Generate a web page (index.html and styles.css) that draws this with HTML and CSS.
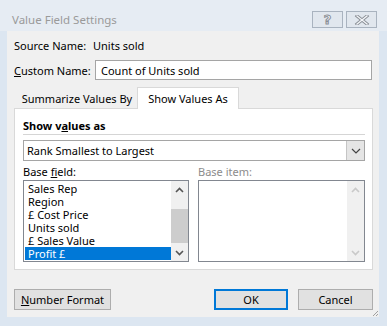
FILE: index.html
```html
<!DOCTYPE html>
<html>
<head>
<meta charset="utf-8">
<link rel="stylesheet" href="styles.css">
</head>
<body>
<div class="window">
  <div class="titlebar">
    <span class="title">Value Field Settings</span>
    <div class="tbtns">
      <div class="tbtn"><span class="qmark">?</span></div>
      <div class="tbtn">
        <svg width="16" height="10" viewBox="0 0 16 10"><path d="M3 1 L13 9 M13 1 L3 9" stroke="#8a8f96" stroke-width="3.2" stroke-linecap="square"/><path d="M3 1 L13 9 M13 1 L3 9" stroke="#f4f6f9" stroke-width="1.3" stroke-linecap="square"/></svg>
      </div>
    </div>
  </div>
  <div class="client">
    <div class="row src"><span class="lbl">Source Name:</span><span class="val">Units sold</span></div>
    <div class="row cust"><span class="lbl"><u>C</u>ustom Name:</span><div class="input">Count of Units sold</div></div>
    <div class="tabs">
      <div class="tab">Summarize Values By</div>
      <div class="tab sel">Show Values As</div>
    </div>
    <div class="panel">
      <div class="heading"><span>Show v<u>a</u>lues as</span></div>
      <div class="sep"></div>
      <div class="combo"><span class="ctext">Rank Smallest to Largest</span><div class="cbtn"><svg width="10" height="6" viewBox="0 0 10 6"><path d="M1 1 L5 5 L9 1" fill="none" stroke="#444" stroke-width="1.2"/></svg></div></div>
      <div class="lists">
        <div class="col">
          <div class="sublbl"><span>Base <u>f</u>ield:</span></div>
          <div class="listbox">
            <div class="items">
              <div class="item">Sales Rep</div>
              <div class="item">Region</div>
              <div class="item">£ Cost Price</div>
              <div class="item">Units sold</div>
              <div class="item">£ Sales Value</div>
              <div class="item selitem">Profit £</div>
            </div>
            <div class="sbar">
              <div class="arr"><svg width="9" height="6" viewBox="0 0 9 6"><path d="M1 5 L4.5 1.5 L8 5" fill="none" stroke="#555" stroke-width="1.6"/></svg></div>
              <div class="track"><div class="thumb"></div></div>
              <div class="arr"><svg width="9" height="6" viewBox="0 0 9 6"><path d="M1 1 L4.5 4.5 L8 1" fill="none" stroke="#555" stroke-width="1.6"/></svg></div>
            </div>
          </div>
        </div>
        <div class="col">
          <div class="sublbl dis"><span>Base item:</span></div>
          <div class="listbox">
            <div class="items"></div>
            <div class="sbar">
              <div class="arr"><svg width="9" height="6" viewBox="0 0 9 6"><path d="M1 5 L4.5 1.5 L8 5" fill="none" stroke="#c9c9c9" stroke-width="1.6"/></svg></div>
              <div class="track"></div>
              <div class="arr"><svg width="9" height="6" viewBox="0 0 9 6"><path d="M1 1 L4.5 4.5 L8 1" fill="none" stroke="#c9c9c9" stroke-width="1.6"/></svg></div>
            </div>
          </div>
        </div>
      </div>
    </div>
    <div class="buttons">
      <div class="btn nf"><span><u>N</u>umber Format</span></div>
      <div class="spacer"></div>
      <div class="btn ok">OK</div>
      <div class="btn cancel">Cancel</div>
    </div>
    <svg class="grip" width="8" height="8" viewBox="0 0 8 8"><path d="M7 2 L2 7 M7 5 L5 7" stroke="#a0a0a0" stroke-width="1"/></svg>
  </div>
</div>
</body>
</html>
```

FILE: styles.css
```css
* { box-sizing: border-box; }
html, body { margin: 0; padding: 0; }
body {
  width: 387px;
  height: 326px;
  overflow: hidden;
  background: #dbe4ee;
  font-family: "Noto Sans", "Open Sans", sans-serif;
  font-size: 11px;
  color: #000;
}
.window {
  width: 387px;
  height: 326px;
  background: #dce6f1;
  display: flex;
  flex-direction: column;
}
.titlebar {
  height: 31px;
  display: flex;
  align-items: flex-start;
  background: #e6ecf3;
}
.title {
  color: #9a9a9a;
  font-size: 11.5px;
  margin: 12px 0 0 12px;
  flex: 1;
}
.tbtns {
  display: flex;
  gap: 3px;
  margin: 11px 10px 0 0;
}
.tbtn {
  width: 31px;
  height: 17px;
  border: 1px solid #a9b3bf;
  background: #e1e7ee;
  display: flex;
  align-items: center;
  justify-content: center;
}
.qmark {
  font-family: "DejaVu Sans", sans-serif;
  font-weight: bold;
  font-size: 13px;
  color: #f4f6f9;
  -webkit-text-stroke: 1px #8a8f96;
  line-height: 1;
}
.client {
  position: relative;
  margin: 0 8px 0 7px;
  height: 286px;
  background: #f0f0f0;
  padding: 4px 7px 0 7px;
  display: flex;
  flex-direction: column;
}
.row { display: flex; align-items: center; }
.src { height: 20px; }
.lbl { width: 83px; white-space: nowrap; }
.val { margin-left: -4px; }
.cust { height: 20px; margin-top: 5px; }
.input {
  flex: none;
  width: 277px;
  height: 20px;
  margin-left: -1px;
  background: #fff;
  border: 1px solid #a5a5a5;
  padding: 0 5px;
  display: flex;
  align-items: center;
}
.tabs {
  display: flex;
  align-items: flex-end;
  margin-top: 7px;
  height: 21px;
  padding-left: 3px;
  position: relative;
  z-index: 1;
  white-space: nowrap;
}
.tab {
  height: 19px;
  display: flex;
  align-items: center;
  width: 120px;
  justify-content: center;
}
.tab.sel {
  height: 22px;
  margin-bottom: -1px;
  background: #fff;
  border: 1px solid #d9d9d9;
  border-bottom: none;
  width: 102px;
  padding-bottom: 1px;
}
.panel {
  width: 359px;
  height: 162px;
  background: #fff;
  border: 1px solid #d9d9d9;
  padding: 7px 8px 0 8px;
}
.heading {
  font-weight: bold;
  height: 18px;
  display: flex;
  align-items: center;
}
.sep {
  height: 1px;
  background: #d5d5d5;
  width: 342px;
}
.combo {
  margin-top: 5px;
  width: 342px;
  height: 21px;
  border: 1px solid #a5a5a5;
  display: flex;
  align-items: center;
}
.ctext { flex: 1; padding-left: 3px; }
.cbtn {
  width: 18px;
  height: 19px;
  background: #e5e5e5;
  border-left: 1px solid #c5c5c5;
  display: flex;
  align-items: center;
  justify-content: center;
}
.lists {
  display: flex;
  gap: 9px;
  margin-top: 2px;
}
.sublbl {
  height: 17px;
  display: flex;
  align-items: center;
}
.sublbl.dis { color: #8c8c8c; }
.listbox {
  width: 166px;
  height: 82px;
  border: 1px solid #828790;
  background: #fff;
  display: flex;
}
.col:last-child .listbox { width: 167px; }
.items {
  flex: 1;
  padding: 1px 0 0 1px;
}
.item {
  height: 13px;
  line-height: 13px;
  padding-left: 3px;
}
.selitem {
  background: #0078d7;
  color: #fff;
}
.sbar {
  width: 17px;
  background: #f0f0f0;
  display: flex;
  flex-direction: column;
}
.arr {
  height: 17px;
  display: flex;
  align-items: center;
  justify-content: center;
}
.track { flex: 1; position: relative; }
.thumb {
  position: absolute;
  left: 0;
  right: 0;
  top: 11px;
  height: 34px;
  background: #cdcdcd;
}
.buttons {
  display: flex;
  margin-top: 19px;
  height: 21px;
}
.spacer { flex: 1; }
.btn {
  height: 21px;
  background: #e1e1e1;
  border: 1px solid #adadad;
  display: flex;
  align-items: center;
  justify-content: center;
}
.nf { width: 97px; }
.ok { width: 74px; border: 2px solid #0078d7; }
.cancel { width: 75px; margin-left: 10px; margin-right: -1px; }
.grip { position: absolute; right: 0; bottom: 0; }
```
